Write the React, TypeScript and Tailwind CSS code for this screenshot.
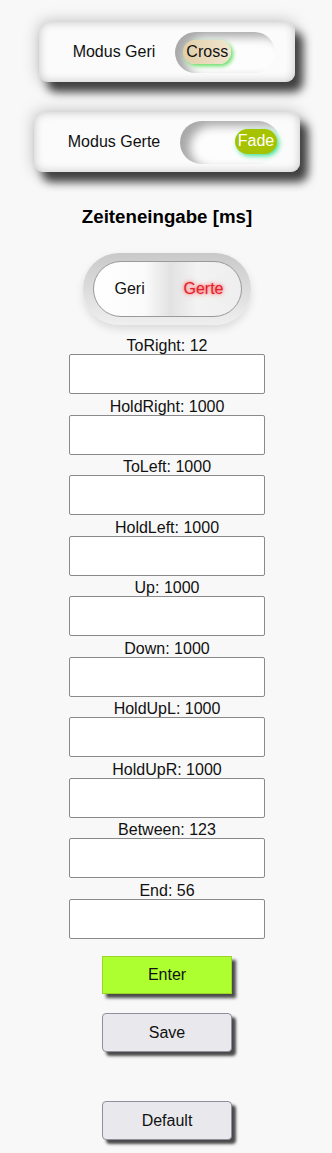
import React from 'react';

const fields: { label: string; value: string }[] = [
  { label: 'ToRight', value: '12' },
  { label: 'HoldRight', value: '1000' },
  { label: 'ToLeft', value: '1000' },
  { label: 'HoldLeft', value: '1000' },
  { label: 'Up', value: '1000' },
  { label: 'Down', value: '1000' },
  { label: 'HoldUpL', value: '1000' },
  { label: 'HoldUpR', value: '1000' },
  { label: 'Between', value: '123' },
  { label: 'End', value: '56' },
];

function ModeCard({ title, children }: { title: string; children: React.ReactNode }) {
  return (
    <div className="mx-auto flex w-fit items-center gap-5 rounded-[9px] bg-[#fbfbfb] pl-[34px] pr-[20px] h-[60px] shadow-[8px_10px_10px_#3f3f3f,0_0_16px_rgba(0,0,0,0.25),inset_0_0_10px_#c4c4c4]">
      <span className="text-[16px] text-[#111]">{title}</span>
      {children}
    </div>
  );
}

export default function App() {
  return (
    <div className="min-h-[1153px] w-full bg-[#f8f8f8] pl-[2px] pt-[22px] font-['Liberation_Sans',Arial,sans-serif] text-[#111]">
      <ModeCard title="Modus Geri">
        <div className="relative h-[41px] w-[100px] rounded-full bg-[#fdfdfd] shadow-[inset_10px_5px_10px_#a9a9a9]">
          <span className="absolute left-[8px] top-[8px] flex h-[24px] items-center rounded-full bg-gradient-to-r from-[#e2cfa8] to-[#f1e6cf] px-[3px] text-[16px] text-[#111] shadow-[2px_2px_4px_#5ddc5d]">
            Cross
          </span>
        </div>
      </ModeCard>

      <div className="h-[30px]" />

      <ModeCard title="Modus Gerte">
        <div className="relative h-[43px] w-[100px] rounded-full bg-[#fdfdfd] shadow-[inset_10px_5px_10px_#a9a9a9]">
          <span className="absolute right-[3px] top-[8px] flex h-[25px] items-center rounded-full bg-[#a7c300] px-[3px] text-[16px] text-white shadow-[2px_2px_5px_#3fe08f]">
            Fade
          </span>
        </div>
      </ModeCard>

      <h2 className="mt-[34px] text-center text-[18.7px] font-bold leading-[22px] text-black">
        Zeiteneingabe [ms]
      </h2>

      <div className="mt-[25px] flex justify-center">
        <div className="flex h-[72px] w-[168px] items-center justify-center rounded-full bg-gradient-to-b from-[#c9c9c9] to-[#efefef] shadow-[0_4px_8px_rgba(0,0,0,0.12)]">
          <div className="flex h-[56px] w-[149px] items-center justify-between rounded-full border border-[#9a9a9a] bg-[linear-gradient(to_right,#ffffff_0%,#fafafa_35%,#e2e2e2_52%,#f3f3f3_70%,#eeeeee_100%)] pl-[21px] pr-[17px] text-[16px]">
            <span className="text-[#111]">Geri</span>
            <span className="text-[#e3202c] [text-shadow:0_0_3px_#ff5a5a,0_0_6px_#ff9a9a]">Gerte</span>
          </div>
        </div>
      </div>

      <div className="mt-[12px] flex flex-col items-center">
        {fields.map((f) => (
          <div key={f.label} className="mb-[3.5px] flex flex-col items-center">
            <label className="text-[16px] leading-[17px]">
              {f.label}: {f.value}
            </label>
            <input
              type="text"
              className="h-[40px] w-[196px] rounded-[2px] border border-[#8a8a8a] bg-white"
            />
          </div>
        ))}
      </div>

      <div className="mt-[14px] flex flex-col items-center">
        <button className="h-[38px] w-[130px] border border-[#9bd52a] bg-[#adff2f] text-[16px] text-[#111] shadow-[4px_4px_3px_#4a4a4a]">
          Enter
        </button>
        <button className="mt-[19px] h-[39px] w-[130px] rounded-[4px] border border-[#8f8f9d] bg-[#e9e9ed] text-[16px] text-[#111] shadow-[4px_4px_3px_#4a4a4a]">
          Save
        </button>
        <button className="mt-[49px] h-[39px] w-[130px] rounded-[4px] border border-[#8f8f9d] bg-[#e9e9ed] text-[16px] text-[#111] shadow-[4px_4px_3px_#4a4a4a]">
          Default
        </button>
      </div>
    </div>
  );
}
